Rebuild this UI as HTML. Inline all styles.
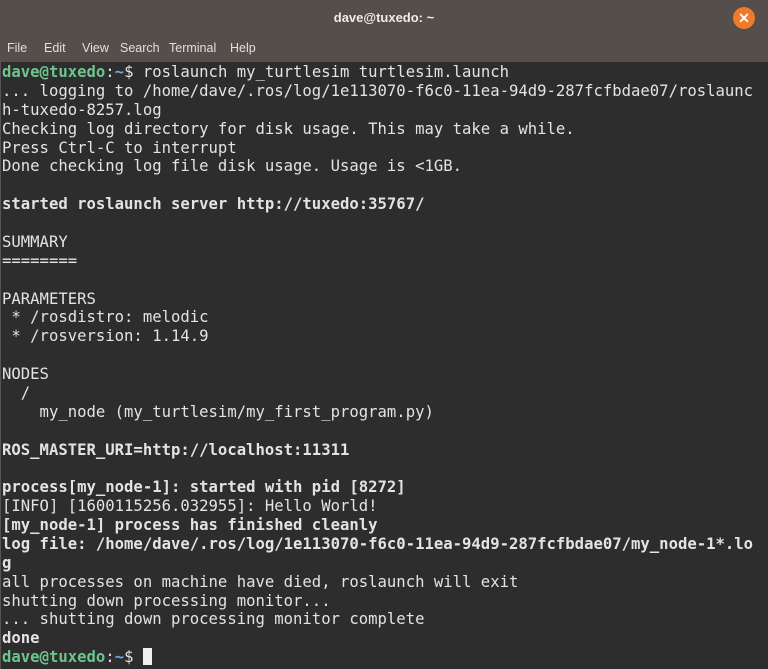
<!DOCTYPE html>
<html><head><style>
html,body{margin:0;padding:0;width:768px;height:669px;overflow:hidden;background:#2d2d2d}
.title{position:absolute;left:0;top:0;width:768px;height:36px;background:#564e4a;color:#f0ecea;font:bold 13px "Liberation Sans",sans-serif;text-align:center;line-height:36px}
.close{position:absolute;left:733px;top:7px;width:22px;height:22px;border-radius:50%;background:#ef7a2a;color:#fff;font:bold 14px "Liberation Sans",sans-serif;line-height:22px;text-align:center}
.menu{position:absolute;left:0;top:36px;width:768px;height:26px;background:#564e4a;color:#e4dfdc;font:12.5px "Liberation Sans",sans-serif;line-height:24px}
.menu span{position:absolute;top:0}
.term{position:absolute;left:0;top:62px;width:768px;height:607px;background:#2d2d2d;border-left:1px solid #555}
pre{margin:0;position:absolute;left:1px;top:1px;font:15.6px/18.87px "DejaVu Sans Mono","Liberation Mono",monospace;color:#e3e3e3;white-space:pre}
b{font-weight:bold}
.g{color:#6fc48d;font-weight:bold}.bl{color:#6aa8dc;font-weight:bold}
.cur{display:inline-block;width:9px;height:17px;background:#f0f0f0;vertical-align:-3px}
</style></head><body>
<div class="title">dave@tuxedo: ~</div><div class="close">✕</div>
<div class="menu"><span style="left:7px">File</span><span style="left:44px">Edit</span><span style="left:82px">View</span><span style="left:120px">Search</span><span style="left:169px">Terminal</span><span style="left:230px">Help</span></div>
<div class="term"><pre><span class="g">dave@tuxedo</span>:<span class="bl">~</span>$ roslaunch my_turtlesim turtlesim.launch
... logging to /home/dave/.ros/log/1e113070-f6c0-11ea-94d9-287fcfbdae07/roslaunc
h-tuxedo-8257.log
Checking log directory for disk usage. This may take a while.
Press Ctrl-C to interrupt
Done checking log file disk usage. Usage is &lt;1GB.

<b>started roslaunch server http://tuxedo:35767/</b>

SUMMARY
========

PARAMETERS
 * /rosdistro: melodic
 * /rosversion: 1.14.9

NODES
  /
    my_node (my_turtlesim/my_first_program.py)

<b>ROS_MASTER_URI=http://localhost:11311</b>

<b>process[my_node-1]: started with pid [8272]</b>
[INFO] [1600115256.032955]: Hello World!
<b>[my_node-1] process has finished cleanly</b>
<b>log file: /home/dave/.ros/log/1e113070-f6c0-11ea-94d9-287fcfbdae07/my_node-1*.lo
g</b>
all processes on machine have died, roslaunch will exit
shutting down processing monitor...
... shutting down processing monitor complete
<b>done</b>
<span class="g">dave@tuxedo</span>:<span class="bl">~</span>$ <span class="cur"></span></pre></div>
</body></html>
